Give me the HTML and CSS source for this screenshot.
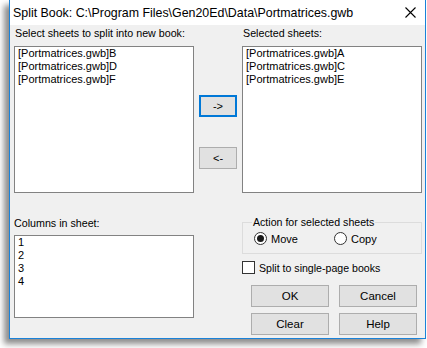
FILE: index.html
```html
<!DOCTYPE html>
<html>
<head>
<meta charset="utf-8">
<link rel="stylesheet" href="styles.css">
</head>
<body>
<div class="window">
  <div class="titlebar">
    <span class="title">Split Book: C:\Program Files\Gen20Ed\Data\Portmatrices.gwb</span>
    <svg class="close" width="11" height="11" viewBox="0 0 11 11"><path d="M0.5 0.5 L10.5 10.5 M10.5 0.5 L0.5 10.5" stroke="#000" stroke-width="1.1" fill="none"/></svg>
  </div>
  <div class="body">
    <div class="top">
      <div class="col">
        <div class="label">Select sheets to split into new book:</div>
        <div class="list big">
          <div class="item">[Portmatrices.gwb]B</div>
          <div class="item">[Portmatrices.gwb]D</div>
          <div class="item">[Portmatrices.gwb]F</div>
        </div>
      </div>
      <div class="mid">
        <div class="btn small focus">-&gt;</div>
        <div class="btn small">&lt;-</div>
      </div>
      <div class="col">
        <div class="label">Selected sheets:</div>
        <div class="list big">
          <div class="item">[Portmatrices.gwb]A</div>
          <div class="item">[Portmatrices.gwb]C</div>
          <div class="item">[Portmatrices.gwb]E</div>
        </div>
      </div>
    </div>
    <div class="bottom">
      <div class="col">
        <div class="label">Columns in sheet:</div>
        <div class="list cols">
          <div class="item">1</div>
          <div class="item">2</div>
          <div class="item">3</div>
          <div class="item">4</div>
        </div>
      </div>
      <div class="right">
        <div class="group">
          <span class="legend">Action for selected sheets</span>
          <div class="radios">
            <div class="radio-item"><span class="radio on"></span><span>Move</span></div>
            <div class="radio-item"><span class="radio"></span><span>Copy</span></div>
          </div>
        </div>
        <div class="check-row"><span class="check"></span><span>Split to single-page books</span></div>
        <div class="buttons">
          <div class="btn">OK</div>
          <div class="btn">Cancel</div>
          <div class="btn">Clear</div>
          <div class="btn">Help</div>
        </div>
      </div>
    </div>
  </div>
</div>
</body>
</html>
```
FILE: styles.css
```css
html, body {
  margin: 0;
  padding: 0;
  background: #ffffff;
  width: 427px;
  height: 348px;
  overflow: hidden;
}
body {
  font-family: "Liberation Sans", Arial, sans-serif;
  font-size: 11px;
  color: #000;
}
.window {
  margin-left: 9px;
  width: 417px;
  height: 339px;
  box-sizing: border-box;
  border: 1px solid #1a82d9;
  border-top: none;
  background: #f0f0f0;
  box-shadow: -5px 5px 6px rgba(0,0,0,0.45);
  display: flex;
  flex-direction: column;
}
.titlebar {
  height: 25px;
  background: #fff;
  display: flex;
  align-items: center;
  padding-left: 3px;
  padding-right: 9px;
  flex-shrink: 0;
}
.title {
  font-size: 12.4px;
  flex: 1;
  white-space: nowrap;
  padding-top: 1px;
}
.close { display: block; margin-top: -1px; }
.body {
  padding: 2px 3px 0 4px;
}
.top {
  display: grid;
  grid-template-columns: 180px 38px 180px;
  column-gap: 5px;
}
.label {
  height: 13px;
  line-height: 13px;
  white-space: nowrap;
  font-size: 10.7px;
  padding-left: 1px;
}
.list {
  background: #fff;
  border: 1px solid #828282;
  box-sizing: border-box;
  padding: 0 3px;
}
.item { line-height: 13px; height: 13px; white-space: nowrap; }
.big { margin-top: 6px; height: 147px; }
.mid {
  display: flex;
  flex-direction: column;
  padding-top: 68px;
  gap: 30px;
}
.btn {
  background: #e1e1e1;
  border: 1px solid #adadad;
  box-sizing: border-box;
  height: 22px;
  display: flex;
  align-items: center;
  justify-content: center;
}
.btn.focus { border: 2px solid #0078d7; }
.bottom {
  display: flex;
  margin-top: 24px;
  gap: 48px;
}
.bottom .col { width: 180px; }
.bottom .label { padding-left: 0; }
.cols { margin-top: 5px; height: 83px; }
.right { width: 180px; padding-top: 5px; }
.group {
  border: 1px solid #dcdcdc;
  height: 32px;
  box-sizing: border-box;
  padding-left: 11px;
}
.legend {
  display: block;
  width: fit-content;
  margin-top: -7px;
  margin-left: -2px;
  padding: 0 1px;
  background: #f0f0f0;
  line-height: 13px;
  font-size: 10.6px;
}
.radios { display: flex; margin-top: 3px; }
.radio-item {
  width: 80px;
  display: flex;
  align-items: center;
  gap: 4px;
  height: 13px;
  font-size: 11px;
}
.radio {
  width: 13px;
  height: 13px;
  box-sizing: border-box;
  border: 1px solid #333;
  border-radius: 50%;
  background: #fff;
  display: flex;
  align-items: center;
  justify-content: center;
}
.radio.on::after {
  content: "";
  width: 7px;
  height: 7px;
  border-radius: 50%;
  background: #1a1a1a;
}
.check-row {
  display: flex;
  align-items: center;
  gap: 4px;
  margin-top: 7px;
  height: 13px;
  font-size: 10.6px;
}
.check {
  width: 13px;
  height: 13px;
  box-sizing: border-box;
  border: 1px solid #333;
  background: #fff;
}
.buttons {
  display: grid;
  grid-template-columns: 78px 78px;
  column-gap: 10px;
  row-gap: 6px;
  margin-top: 11px;
  margin-left: 9px;
}
.buttons .btn { font-size: 11.5px; }
```
